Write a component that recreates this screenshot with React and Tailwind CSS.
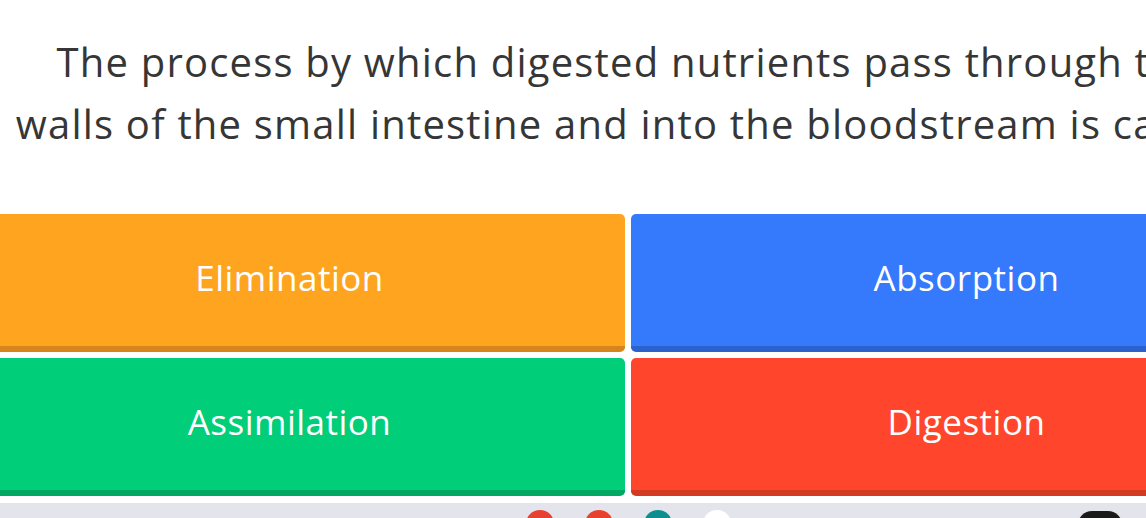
import React from "react";

const options = [
  { label: "Elimination", bg: "bg-[#ffa41f]", border: "border-[#d4861c]" },
  { label: "Absorption", bg: "bg-[#3579fc]", border: "border-[#2b62cc]" },
  { label: "Assimilation", bg: "bg-[#00ce78]", border: "border-[#00a962]" },
  { label: "Digestion", bg: "bg-[#ff452b]", border: "border-[#d43a22]" },
];

export default function App() {
  return (
    <div className="w-[1146px] h-[518px] overflow-hidden bg-white flex flex-col" style={{ fontFamily: "'Open Sans', Lato, sans-serif" }}>
      <div className="w-[1348px] ml-[-46px] shrink-0">
        <h1 className="pt-[31px] text-center text-[40px] leading-[62px] tracking-[1.2px] font-normal text-[#363636] whitespace-nowrap">
          The process by which digested nutrients pass through the
          <br />
          walls of the small intestine and into the bloodstream is called:
        </h1>
        <div className="mt-[59px] grid grid-cols-2 gap-[6px]">
          {options.map((o) => (
            <button
              key={o.label}
              className={`h-[138px] pb-[4px] rounded-[5px] border-b-[6px] ${o.bg} ${o.border} text-white text-[35px] tracking-[0.5px] flex items-center justify-center`}
            >
              {o.label}
            </button>
          ))}
        </div>
      </div>
      <div className="mt-[7px] flex-1 bg-[#e4e5ec] relative">
        <div className="absolute left-[526px] top-[7px] flex gap-[31px]">
          <div className="w-[28px] h-[28px] rounded-full bg-[#e8412f]" />
          <div className="w-[28px] h-[28px] rounded-full bg-[#e8412f]" />
          <div className="w-[28px] h-[28px] rounded-full bg-[#0e8f8f]" />
          <div className="w-[28px] h-[28px] rounded-full bg-white" />
        </div>
        <div className="absolute left-[1078px] top-[8px] w-[44px] h-[14px] rounded-t-full bg-[#1a1a1a]" />
      </div>
    </div>
  );
}
